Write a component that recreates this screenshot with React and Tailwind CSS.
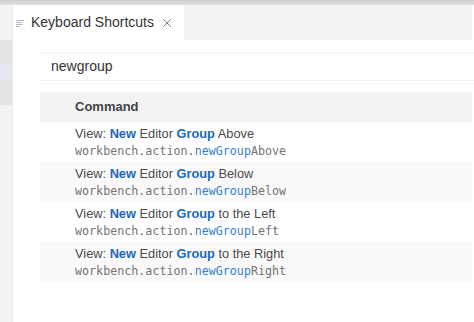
import { X } from 'lucide-react';

const rows = [
  { suffix: 'Above', id: 'Above', shade: false },
  { suffix: 'Below', id: 'Below', shade: true },
  { suffix: 'to the Left', id: 'Left', shade: false },
  { suffix: 'to the Right', id: 'Right', shade: true },
];

function Row({ suffix, id, shade }) {
  return (
    <div className={`h-[40px] pl-[35px] flex flex-col justify-center ${shade ? 'bg-[#f9f9f9]' : 'bg-white'}`}>
      <div className="text-[12.8px] leading-[17px] text-[#4a4a4a]">
        View: <span className="font-bold text-[#1a69b8]">New</span> Editor{' '}
        <span className="font-bold text-[#1a69b8]">Group</span> {suffix}
      </div>
      <div className="font-['DejaVu_Sans_Mono',monospace] text-[11.7px] leading-[18px] text-[#747474]">
        workbench.action.<span className="text-[#3a7dc9]">newGroup</span>
        {id}
      </div>
    </div>
  );
}

export default function App() {
  return (
    <div className="w-[474px] h-[322px] flex flex-col bg-white font-['Liberation_Sans',Arial,sans-serif] overflow-hidden">
      <div className="h-[5px] bg-gradient-to-b from-[#cfcfcf] to-[#e2e2e2]" />
      <div className="flex flex-1">
        {/* sidebar edge */}
        <div className="w-[13px] flex flex-col bg-[#f3f3f3] border-r border-[#e8e8e8]">
          <div className="h-[35px]" />
          <div className="h-[23px] bg-[#e4e4e4]" />
          <div className="h-[18px] bg-[#e5e7f2]" />
          <div className="h-[24px] bg-[#e4e4e4]" />
        </div>

        <div className="flex-1 flex flex-col">
          {/* tab bar */}
          <div className="h-[35px] flex bg-[#f3f3f3] mr-[2px]">
            <div className="w-[171px] bg-white flex items-center pl-[2px]">
              <svg width="10" height="10" viewBox="0 0 10 10" className="mr-[6px]">
                <g stroke="#b5b5b5" strokeWidth="1">
                  <line x1="1" y1="2.5" x2="9" y2="2.5" />
                  <line x1="1" y1="4.5" x2="7" y2="4.5" />
                  <line x1="1" y1="6.5" x2="8" y2="6.5" />
                  <line x1="1" y1="8.5" x2="5" y2="8.5" />
                </g>
              </svg>
              <span className="text-[14px] text-[#333]">Keyboard Shortcuts</span>
              <X className="ml-[6px] text-[#666]" size={14} strokeWidth={1.4} />
            </div>
          </div>

          <div className="pl-[27px] pt-[12px] flex flex-col">
            {/* search */}
            <div className="h-[29px] border-y border-[#eeeeee] bg-white flex items-center pl-[11px] text-[14px] text-[#333]">
              newgroup
            </div>

            {/* table */}
            <div className="mt-[11px] mr-[2px]">
              <div className="h-[30px] bg-[#f3f3f3] pl-[35px] flex items-center text-[13px] font-bold text-[#444]">
                Command
              </div>
              {rows.map((r) => (
                <Row key={r.id} {...r} />
              ))}
            </div>
          </div>
        </div>
      </div>
    </div>
  );
}
